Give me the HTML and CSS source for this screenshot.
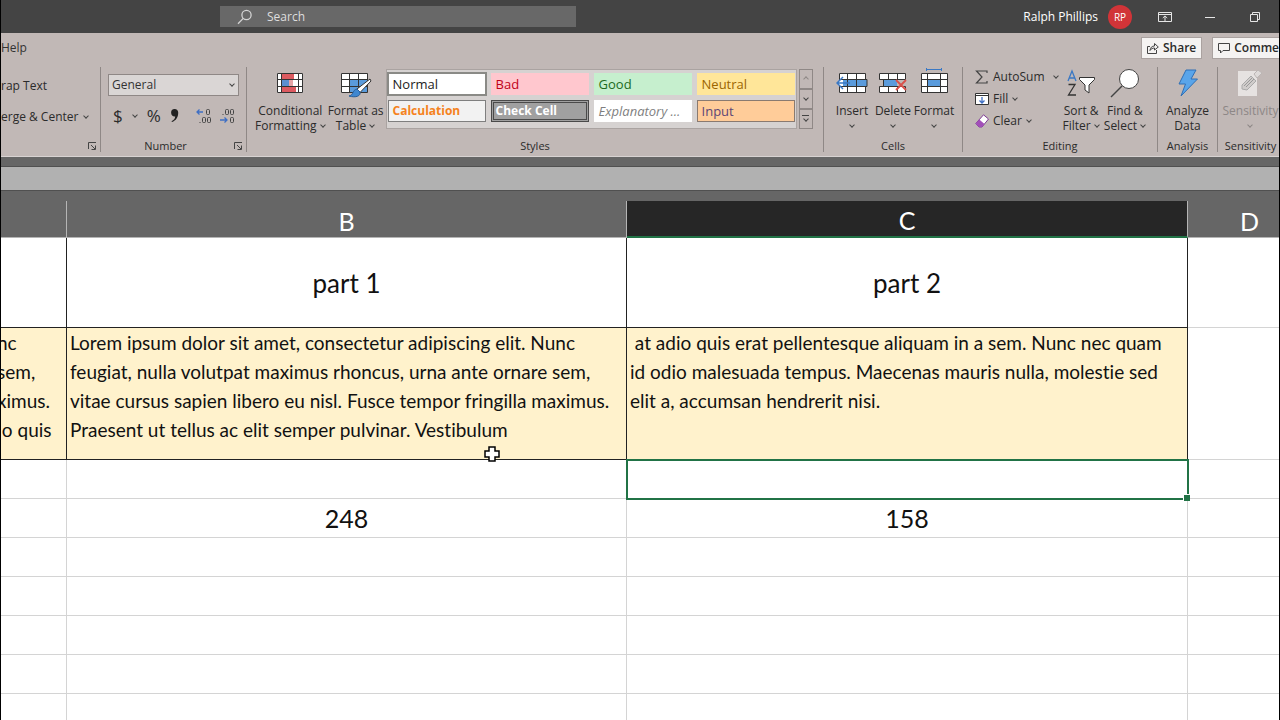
FILE: index.html
```
<!DOCTYPE html>
<html lang="en">

<head>
    <meta charset="UTF-8">
    <meta name="viewport" content="width=device-width, initial-scale=1.0">
    <title>Spreadsheet</title>
    <link rel="stylesheet" href="styles.css">
</head>

<body>
    <header class="titlebar">
        <label class="search">
            <svg width="16" height="16" viewBox="0 0 16 16" fill="none" stroke="#d4d4d4" stroke-width="1.3"><circle cx="9.5" cy="6" r="4.6" /><path d="M6.2 9.4L1 14.8" /></svg>
            <input type="text" placeholder="Search" aria-label="Search">
        </label>
        <div class="account">
            <span class="user">Ralph Phillips</span>
            <span class="avatar">RP</span>
            <button class="window-button" aria-label="Ribbon display options">
                <svg width="14" height="12" viewBox="0 0 14 12" fill="none" stroke="#e6e6e6"><path d="M.5 1.5h13v9H.5zM.5 3.5h13M7 10V5M4.8 7L7 4.9 9.2 7" /></svg>
            </button>
            <button class="window-button" aria-label="Minimize">
                <svg width="14" height="12" viewBox="0 0 14 12" fill="none" stroke="#e6e6e6"><path d="M2 6.5h10" /></svg>
            </button>
            <button class="window-button" aria-label="Restore">
                <svg width="14" height="12" viewBox="0 0 14 12" fill="none" stroke="#e6e6e6"><path d="M2.500 3.500h7v7h-7zM4.500 3V1.500h7v7H10" /></svg>
            </button>
        </div>
    </header>

    <nav class="tabs">
        <a href="#" class="tab">Help</a>
        <div class="tab-actions">
            <button class="action">
                <svg width="12" height="12" viewBox="0 0 12 12" fill="none" stroke="#444"><path d="M3 4.500H.5v7h9V8M3 8.500C3.300 5.500 5 4 7.500 4V1.500L11.300 5 7.500 8V6C5.500 6 4 6.800 3 8.500z" /></svg>
                Share
            </button>
            <button class="action">
                <svg width="12" height="12" viewBox="0 0 12 12" fill="none" stroke="#444"><path d="M.5 1.500h11v7H5L2.500 11V8.500h-2z" /></svg>
                Comme
            </button>
        </div>
    </nav>

    <section class="ribbon">
        <div class="group group-alignment">
            <div class="stack">
                <button class="tool">rap Text</button>
                <button class="tool">erge &amp; Center <i class="chevron"></i></button>
            </div>
            <svg class="launcher" width="9" height="9" viewBox="0 0 9 9" fill="none" stroke="#444"><path d="M.5 7V.5H8M3 3l4 4M7.500 3.500v4h-4" /></svg>
        </div>

        <div class="group group-number">
            <div class="number-format">
                <select aria-label="Number format">
                    <option>General</option>
                </select>
                <i class="chevron"></i>
            </div>
            <div class="number-tools">
                <button class="symbol">$</button>
                <i class="chevron"></i>
                <button class="symbol">%</button>
                <button class="symbol" aria-label="Comma style">
                    <svg width="9" height="14" viewBox="0 0 9 14"><path d="M4.500 0a3.600 3.600 0 0 1 3.700 3.900C8.200 8 6 11.500 2 13l-.5-.8C4 11 5 9.500 5.200 7.400A3.600 3.600 0 1 1 4.500 0z" fill="#222" /></svg>
                </button>
                <button class="symbol decimals" aria-label="Increase decimal">
                    <svg width="16" height="16" viewBox="0 0 16 16" fill="none" stroke="#444"><path d="M7 4H1M3.500 1.500L1 4l2.500 2.500" stroke="#3f6fc4" stroke-width="1.300" /><rect x="10.500" y="1.500" width="3" height="5" rx="1" /><rect x="6.500" y="9.500" width="3" height="5" rx="1" /><rect x="11.500" y="9.500" width="3" height="5" rx="1" /><path d="M3.500 14.500h1" /></svg>
                </button>
                <button class="symbol" aria-label="Decrease decimal">
                    <svg width="16" height="16" viewBox="0 0 16 16" fill="none" stroke="#444"><path d="M1 12h7M5.500 9.500L8 12l-2.500 2.500" stroke="#3f6fc4" stroke-width="1.300" /><rect x="6.500" y="1.500" width="3" height="5" rx="1" /><rect x="11.500" y="1.500" width="3" height="5" rx="1" /><rect x="11.500" y="9.500" width="3" height="5" rx="1" /><path d="M3.500 6.500h1" /></svg>
                </button>
            </div>
            <span class="group-label">Number</span>
            <svg class="launcher" width="9" height="9" viewBox="0 0 9 9" fill="none" stroke="#444"><path d="M.5 7V.5H8M3 3l4 4M7.500 3.500v4h-4" /></svg>
        </div>

        <div class="group group-styles">
            <div class="tools">
                <button class="big-tool">
                    <svg width="28" height="24" viewBox="0 0 28 24"><path d="M1 2h26v20H1z" fill="#fff" /><path d="M6 2h12v6H6zM6 15h14v7H6z" fill="#dc5a60" /><path d="M6 8h7v7H6z" fill="#5b8fd0" /><path d="M13 8h4v7h-4z" fill="#e5a3a5" /><path d="M1.500 2.500h25v19h-25zM1 8.500h26M1 15.500h26M5.500 2v20M22.500 2v20" fill="none" stroke="#333" /></svg>
                    <span>Conditional<br>Formatting <i class="chevron"></i></span>
                </button>
                <button class="big-tool">
                    <svg width="32" height="28" viewBox="0 0 32 28"><path d="M1 4h26v20H1z" fill="#fff" /><path d="M10 11h17v13H10z" fill="#5a9bdc" /><path d="M1.500 4.500h26v19h-26zM1 10.500h26M1 17.500h26M9.500 4v20M18.500 4v20" fill="none" stroke="#333" /><path d="M30 10L17 20l3 3.500L31 12z" fill="#fff" stroke="#333" /><path d="M17 20c-5 1-3 6-8 7 7 2 12 0 11-4z" fill="#3f87d0" stroke="#285c97" /></svg>
                    <span>Format as<br>Table <i class="chevron"></i></span>
                </button>
                <div class="gallery">
                    <button class="style style-normal">Normal</button>
                    <button class="style style-bad">Bad</button>
                    <button class="style style-good">Good</button>
                    <button class="style style-neutral">Neutral</button>
                    <button class="style style-calculation">Calculation</button>
                    <button class="style style-check">Check Cell</button>
                    <button class="style style-explanatory">Explanatory ...</button>
                    <button class="style style-input">Input</button>
                </div>
                <div class="gallery-scroll">
                    <button aria-label="Scroll up" disabled><i class="chevron up"></i></button>
                    <button aria-label="Scroll down"><i class="chevron"></i></button>
                    <button class="more" aria-label="More styles"><i class="chevron"></i></button>
                </div>
            </div>
            <span class="group-label">Styles</span>
        </div>

        <div class="group group-cells">
            <div class="tools">
                <button class="big-tool">
                    <svg width="32" height="24" viewBox="0 0 32 24"><path d="M3 2h26v20H3z" fill="#fff" /><path d="M7 9h24v6H7z" fill="#5a9bdc" /><path d="M3.500 8.500v-6h26v6M3.500 15.500v6h26v-6M3 8.500h28v7H3M11.500 2v20M20.500 2v20" fill="none" stroke="#333" /><path d="M14 12H1M7 6l-6 6 6 6" fill="none" stroke="#3a78c4" stroke-width="1.500" /></svg>
                    <span>Insert<br><i class="chevron"></i></span>
                </button>
                <button class="big-tool">
                    <svg width="30" height="24" viewBox="0 0 30 24"><path d="M1 2h26v6H1zM1 16h26v6H1z" fill="#fff" /><path d="M5 9h14v6H5z" fill="#5a9bdc" /><path d="M1.500 8.500v-6h26v6H1.500M1.500 21.500v-6h26v6zM5.500 8v7M10.500 2v6M19.500 2v6M10.500 16v6M19.500 16v6" fill="none" stroke="#333" /><path d="M18 9l10 10M28 9L18 19" fill="none" stroke="#d9504a" stroke-width="1.800" /></svg>
                    <span>Delete<br><i class="chevron"></i></span>
                </button>
                <button class="big-tool">
                    <svg width="28" height="30" viewBox="0 0 28 30"><path d="M1 5h26v20H1z" fill="#fff" /><path d="M8 11h13v7H8z" fill="#5a9bdc" /><path d="M1.500 5.500h26v19h-26zM1 11.500h26M1 18.500h26M7.500 5v20M20.500 5v20" fill="none" stroke="#333" /><path d="M7 1.500h14M6.500 0v3M21.500 0v3" fill="none" stroke="#3a78c4" /></svg>
                    <span>Format<br><i class="chevron"></i></span>
                </button>
            </div>
            <span class="group-label">Cells</span>
        </div>

        <div class="group group-editing">
            <div class="tools">
                <div class="edit-list">
                    <button class="tool">
                        <svg width="14" height="14" viewBox="0 0 14 14" fill="none" stroke="#444" stroke-width="1.200"><path d="M12 3V1H1.500l5.500 6-5.500 6H12v-2" /></svg>
                        AutoSum <i class="chevron spaced"></i>
                    </button>
                    <button class="tool">
                        <svg width="14" height="14" viewBox="0 0 14 14" fill="none"><path d="M.5 1.500h13v11H.5z" fill="#fff" stroke="#333" /><path d="M.5 3.500h13" stroke="#333" /><path d="M7 5v6M4.500 8.500L7 11l2.500-2.500" stroke="#3f6fc4" stroke-width="1.300" /></svg>
                        Fill <i class="chevron"></i>
                    </button>
                    <button class="tool">
                        <svg width="14" height="14" viewBox="0 0 14 14"><path d="M8.500.8l5 4.200L7 13H4L.8 9.500z" fill="#fff" stroke="#7d3a93" /><path d="M4.300 5.500L9.500 10 7 13H4L.8 9.500z" fill="#a24fb8" /></svg>
                        Clear <i class="chevron"></i>
                    </button>
                </div>
                <button class="big-tool">
                    <svg width="30" height="28" viewBox="0 0 30 28" fill="none"><path d="M2 12L6 2l4 10M3.500 9h5" stroke="#3a78c4" stroke-width="1.300" /><path d="M2.500 15.500H9L2.500 26H10" stroke="#333" stroke-width="1.300" /><path d="M13.500 8.500h15v2L23 16v8l-4-3v-5l-5.500-5.500z" fill="#fff" stroke="#333" /></svg>
                    <span>Sort &amp;<br>Filter <i class="chevron"></i></span>
                </button>
                <button class="big-tool">
                    <svg width="30" height="30" viewBox="0 0 30 30"><circle cx="19" cy="11" r="9.500" fill="#fff" stroke="#444" /><path d="M12 18L1 29" stroke="#444" stroke-width="1.500" /></svg>
                    <span>Find &amp;<br>Select <i class="chevron"></i></span>
                </button>
            </div>
            <span class="group-label">Editing</span>
        </div>

        <div class="group group-analysis">
            <button class="big-tool">
                <svg width="22" height="28" viewBox="0 0 22 28"><path d="M9 1h10l-5 9h6.500L4 27l4.500-12H2z" fill="#5aa5ea" stroke="#2f6fb5" /></svg>
                <span>Analyze<br>Data</span>
            </button>
            <span class="group-label">Analysis</span>
        </div>

        <div class="group group-sensitivity">
            <button class="big-tool" disabled>
                <svg width="26" height="28" viewBox="0 0 26 28"><path d="M1 2h19v25H1z" fill="#e6e2e1" /><path d="M17 5l4-4 4 3-5 5z" fill="#dedad9" stroke="#bbb5b4" /><path d="M5 16L14 7l5 5-9 9-5-1z" fill="#d0cccb" stroke="#aaa" /><path d="M7 17l8-8M9 18l8-8" stroke="#999" /></svg>
                <span>Sensitivity<br><i class="chevron"></i></span>
            </button>
            <span class="group-label">Sensitivity</span>
        </div>
    </section>

    <div class="formula-bar"></div>

    <main class="sheet">
        <table>
            <colgroup>
                <col class="col-a">
                <col class="col-b">
                <col class="col-c">
                <col>
            </colgroup>
            <thead>
                <tr>
                    <th></th>
                    <th>B</th>
                    <th class="active">C</th>
                    <th class="col-d">D</th>
                </tr>
            </thead>
            <tbody>
                <tr class="row-title">
                    <td></td>
                    <td>part 1</td>
                    <td>part 2</td>
                    <td></td>
                </tr>
                <tr class="row-text">
                    <td class="cut"><div>nc<br>sem,<br>ximus.<br>&nbsp;o quis</div></td>
                    <td>Lorem ipsum dolor sit amet, consectetur adipiscing elit. Nunc<br>feugiat, nulla volutpat maximus rhoncus, urna ante ornare sem,<br>vitae cursus sapien libero eu nisl. Fusce tempor fringilla maximus.<br>Praesent ut tellus ac elit semper pulvinar. Vestibulum
                        <svg class="cursor" width="16" height="16" viewBox="0 0 16 16"><path d="M5 1h6v4h4v6h-4v4H5v-4H1V5h4z" fill="#fff" stroke="#000" stroke-width="1.500" /></svg>
                    </td>
                    <td>&nbsp;at adio quis erat pellentesque aliquam in a sem. Nunc nec quam<br>id odio malesuada tempus. Maecenas mauris nulla, molestie sed<br>elit a, accumsan hendrerit nisi.</td>
                    <td></td>
                </tr>
                <tr><td></td><td></td><td class="selected"><div class="selection"></div></td><td></td></tr>
                <tr><td></td><td>248</td><td>158</td><td></td></tr>
                <tr><td></td><td></td><td></td><td></td></tr>
                <tr><td></td><td></td><td></td><td></td></tr>
                <tr><td></td><td></td><td></td><td></td></tr>
                <tr><td></td><td></td><td></td><td></td></tr>
                <tr><td></td><td></td><td></td><td></td></tr>
                <tr><td></td><td></td><td></td><td></td></tr>
            </tbody>
        </table>
    </main>
</body>

</html>
```
FILE: styles.css
```
* {
    box-sizing: border-box;
}

body {
    margin: 0;
    height: 100vh;
    overflow: hidden;
    display: flex;
    flex-direction: column;
    border-left: 1px solid #000;
    border-right: 1px solid #000;
    background-color: #666;
    font-family: "Open Sans", "Noto Sans", sans-serif;
    font-size: 12px;
    line-height: 16px;
    color: #2b2b2b;
}

button {
    border: none;
    padding: 0;
    background: none;
    font: inherit;
    color: inherit;
}

svg {
    flex: none;
}

/* title bar */
.titlebar {
    display: flex;
    justify-content: space-between;
    align-items: center;
    height: 33px;
    flex: none;
    padding: 0 2px 0 219px;
    background-color: #444;
    color: #fff;
}

.search {
    display: flex;
    align-items: center;
    gap: 14px;
    width: 356px;
    height: 21px;
    padding-left: 17px;
    background-color: #686868;
}

.search input {
    flex: 1;
    border: none;
    padding: 0;
    background: none;
    font: inherit;
    color: #fff;
}

.search input::placeholder {
    color: #dedede;
}

.account {
    display: flex;
    align-items: center;
}

.avatar {
    width: 24px;
    height: 24px;
    margin: 0 10px;
    border-radius: 50%;
    background-color: #d13438;
    font-size: 10px;
    line-height: 24px;
    text-align: center;
}

.window-button {
    display: flex;
    justify-content: center;
    width: 45px;
}

/* tabs */
.tabs {
    display: flex;
    justify-content: space-between;
    align-items: center;
    height: 30px;
    flex: none;
    background-color: #c1b8b6;
}

.tab {
    color: #333;
    text-decoration: none;
}

.tab-actions {
    display: flex;
    gap: 10px;
}

.action {
    display: flex;
    align-items: center;
    gap: 4px;
    height: 22px;
    padding: 0 5px;
    border: 1px solid #aaa2a0;
    background-color: #f5f3f2;
    font-weight: 600;
}

.action:last-child {
    padding-right: 0;
    border-right: none;
}

/* ribbon */
.ribbon {
    display: flex;
    height: 94px;
    flex: none;
    padding: 4px 0 0;
    border-bottom: 1px solid #d8d3d2;
    background-color: #c1b8b6;
}

.group {
    position: relative;
    display: flex;
    flex-direction: column;
    align-items: center;
    flex: none;
    margin-bottom: 4px;
    border-right: 1px solid #8f8886;
}

.group-label {
    margin-top: auto;
    font-size: 11px;
    line-height: 12px;
}

.launcher {
    position: absolute;
    right: 3px;
    bottom: 1px;
}

.group-alignment {
    width: 100px;
    align-items: flex-start;
}

.group-number {
    width: 146px;
}

.group-number .group-label {
    margin-right: 16px;
}

.group-styles {
    flex: 1;
}

.group-cells {
    width: 139px;
}

.group-editing {
    width: 195px;
}

.group-analysis {
    width: 60px;
}

.group-sensitivity {
    width: 61px;
    padding-left: 4px;
    border-right: none;
}

.group-sensitivity .big-tool {
    color: #8d8786;
}

.group-sensitivity .chevron {
    border-color: #8d8786;
}

.tools {
    display: flex;
    align-items: flex-start;
}

.tool {
    display: flex;
    align-items: center;
    gap: 4px;
    white-space: nowrap;
}

.big-tool {
    display: flex;
    flex-direction: column;
    align-items: center;
    white-space: nowrap;
}

.big-tool svg {
    height: 32px;
    margin-bottom: 4px;
}

.big-tool span {
    line-height: 15px;
}

.chevron {
    display: inline-block;
    flex: none;
    width: 4px;
    height: 4px;
    margin: 0 1px 3px;
    border: solid #444;
    border-width: 0 1px 1px 0;
    transform: rotate(45deg);
}

.chevron.up {
    margin-bottom: 0;
    border-color: #8f8886;
    transform: rotate(225deg);
}

.stack {
    display: flex;
    flex-direction: column;
    gap: 15px;
    padding-top: 11px;
}

.stack .tool {
    gap: 5px;
}

.number-format {
    display: flex;
    align-items: center;
    width: 131px;
    height: 22px;
    margin-top: 7px;
    padding-right: 3px;
    border: 1px solid #8f8886;
    background-color: #dad6d5;
}

.number-format select {
    appearance: none;
    flex: 1;
    padding: 0 3px;
    border: none;
    background: none;
    font: inherit;
    color: #333;
}

.number-tools {
    display: flex;
    align-items: center;
    gap: 9px;
    margin: 9px 0 0 1px;
}

.symbol {
    display: flex;
    font-size: 17px;
    line-height: 22px;
}

.symbol.decimals {
    margin-left: 8px;
}

.symbol.decimals + .symbol {
    margin-left: -2px;
}

.group-styles .tools {
    gap: 2px;
    align-self: flex-start;
    padding-left: 8px;
}

.gallery {
    display: grid;
    grid-template-columns: repeat(4, 98px);
    grid-template-rows: 22px 22px;
    gap: 5px;
    margin-top: 2px;
    padding: 3px 1px 6px;
    border: 1px solid #aaa3a1;
    background-color: #d6d2d1;
}

.style {
    padding: 0 5px;
    line-height: 20px;
    font-size: 13px;
    text-align: left;
    white-space: nowrap;
}

.style-normal {
    background-color: #fff;
    outline: 2px solid #8a8a86;
    outline-offset: -1px;
    color: #222;
}

.style-bad {
    background-color: #ffc7ce;
    color: #c00018;
}

.style-good {
    background-color: #c6efce;
    color: #1c6b1c;
}

.style-neutral {
    background-color: #ffe699;
    color: #9c6500;
}

.style-calculation {
    padding: 0 4px;
    border: 1px solid #7f7f7f;
    background-color: #f2f2f2;
    color: #f58220;
    font-size: 12px;
    font-weight: 700;
}

.style-check {
    padding: 0 2px;
    border: 3px double #4a4a4a;
    background-color: #a0a0a0;
    color: #fff;
    font-size: 12px;
    font-weight: 700;
    line-height: 16px;
}

.style-explanatory {
    background-color: #fff;
    color: #7f7f7f;
    font-style: italic;
}

.style-input {
    padding: 0 4px;
    border: 1px solid #8a7a70;
    background-color: #ffcc99;
    color: #5c4676;
}

.gallery-scroll {
    display: flex;
    flex-direction: column;
    margin-top: 2px;
}

.gallery-scroll button {
    display: flex;
    flex-direction: column;
    align-items: center;
    justify-content: center;
    width: 14px;
    height: 20px;
    border: 1px solid #8f8886;
}

.gallery-scroll .more::before {
    content: "";
    width: 7px;
    height: 1px;
    margin-bottom: 1px;
    background-color: #444;
}

.group-cells .big-tool {
    width: 41px;
}

.edit-list {
    display: flex;
    flex-direction: column;
    gap: 6px;
    padding-top: 2px;
}

.group-editing .tools {
    align-self: flex-start;
    gap: 4px;
    padding-left: 12px;
}

.chevron.spaced {
    margin-left: 5px;
}

.formula-bar {
    height: 25px;
    flex: none;
    margin-top: 9px;
    border-top: 1px solid #505050;
    border-bottom: 1px solid #505050;
    background-color: #b1b1b1;
}

/* grid */
.sheet {
    flex: 1;
    min-height: 0;
    padding-top: 10px;
    overflow: hidden;
    font-family: Lato, "Open Sans", sans-serif;
    font-variant-ligatures: none;
    color: #111;
}

table {
    width: 100%;
    table-layout: fixed;
    border-spacing: 0;
}

.col-a {
    width: 66px;
}

.col-b {
    width: 560px;
}

.col-c {
    width: 561px;
}

th {
    height: 37px;
    padding: 3px 0 0;
    border-right: 1px solid #b5b5b5;
    border-bottom: 1px solid #b5b5b5;
    font-size: 25px;
    font-weight: 400;
    line-height: 30px;
    color: #fff;
}

th.active {
    background-color: #262626;
    border-bottom: 2px solid #217346;
}

th:last-child,
td:last-child {
    border-right: none;
}

th.col-d {
    padding-left: 32px;
}

td {
    height: 39px;
    padding: 0;
    border-right: 1px solid #d4d4d4;
    border-bottom: 1px solid #d4d4d4;
    background-color: #fff;
    font-size: 25px;
    line-height: 30px;
    text-align: center;
}

.row-title td {
    height: 90px;
    font-size: 26px;
}

.row-title td:not(:last-child),
.row-text td:not(:last-child) {
    border-color: #222;
}

.row-text td {
    position: relative;
    height: 132px;
    padding: 0 3px;
    font-size: 19px;
    line-height: 29px;
    text-align: left;
    vertical-align: top;
    white-space: nowrap;
}

.row-text td:not(:last-child) {
    background-color: #fff2cc;
}

/* text running in from the column's hidden left side */
.row-text .cut {
    padding: 0;
    overflow: hidden;
}

.cut div {
    margin-left: -4px;
}

.cursor {
    position: absolute;
    left: 417px;
    bottom: -3px;
}

.selected {
    position: relative;
}

.selection {
    position: absolute;
    inset: -1px -2px -2px -1px;
    border: 2px solid #217346;
}

.selection::after {
    content: "";
    position: absolute;
    right: -3px;
    bottom: -3px;
    width: 6px;
    height: 6px;
    border: solid #fff;
    border-width: 1px 0 0 1px;
    background-color: #217346;
}
```
